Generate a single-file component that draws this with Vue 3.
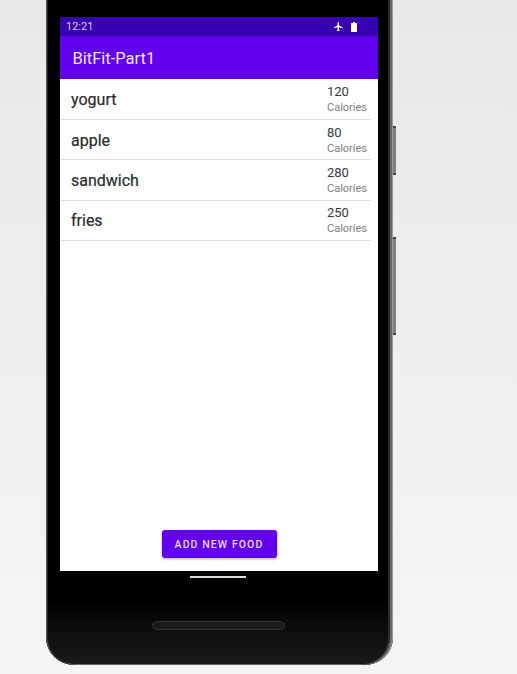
<template>
  <div class="page">
    <div class="phone">
      <div class="side-btn power"></div>
      <div class="side-btn volume"></div>
      <div class="screen">
        <div class="status-bar">
          <span class="time">12:21</span>
          <div class="status-icons">
            <svg width="11" height="11" viewBox="0 0 24 24"><path fill="#fff" d="M21 16v-2l-8-5V3.500C13 2.670 12.330 2 11.500 2S10 2.670 10 3.500V9l-8 5v2l8-2.500V19l-2 1.500V22l3.500-1 3.500 1v-1.500L13 19v-5.500l8 2.500z"/></svg>
            <svg width="12" height="12" viewBox="0 0 24 24"><path fill="#fff" d="M17 4h-3V2h-4v2H7c-.6 0-1 .4-1 1v16c0 .6.400 1 1 1h10c.6 0 1-.4 1-1V5c0-.6-.4-1-1-1z"/></svg>
          </div>
        </div>
        <div class="app-bar">BitFit-Part1</div>
        <div class="content">
          <div class="food-list">
            <div class="food-row" v-for="food in foods" :key="food.name">
              <span class="food-name">{{ food.name }}</span>
              <div class="food-cal">
                <span class="cal-num">{{ food.calories }}</span>
                <span class="cal-label">Calories</span>
              </div>
            </div>
          </div>
          <button class="add-btn">ADD NEW FOOD</button>
        </div>
      </div>
      <div class="nav-zone">
        <div class="home-pill"></div>
        <div class="speaker"></div>
      </div>
    </div>
  </div>
</template>

<script setup>
const foods = [
  { name: 'yogurt', calories: 120 },
  { name: 'apple', calories: 80 },
  { name: 'sandwich', calories: 280 },
  { name: 'fries', calories: 250 }
]
</script>

<style>
html, body {
  margin: 0;
  overflow: hidden;
}
</style>

<style scoped>
.page {
  width: 517px;
  height: 674px;
  box-sizing: border-box;
  padding-left: 46px;
  background: linear-gradient(#e8e8e8, #f5f5f5);
  font-family: Roboto, "Liberation Sans", sans-serif;
  overflow: hidden;
}
.phone {
  position: relative;
  width: 347px;
  height: 665px;
  box-sizing: border-box;
  padding: 17px 14px 0;
  background: linear-gradient(#000 90%, #1a1a1a 100%);
  border-radius: 0 0 28px 28px;
  box-shadow: inset 1px 0 0 #555, inset 2px 0 0 #222, inset -1px 0 0 #999, inset -3px 0 0 #666, inset -5px 0 0 #2a2a2a, inset 0 -1px 0 #666;
  display: flex;
  flex-direction: column;
}
.side-btn {
  position: absolute;
  right: -3px;
  width: 3px;
  background: #808080;
  border-top: 2px solid #444;
  border-bottom: 2px solid #444;
}
.power {
  top: 126px;
  height: 45px;
}
.volume {
  top: 237px;
  height: 94px;
}
.screen {
  height: 554px;
  width: 318px;
  background: #fff;
  display: flex;
  flex-direction: column;
}
.status-bar {
  height: 19px;
  flex: none;
  background: #3700b3;
  color: #d9ccf2;
  display: flex;
  align-items: center;
  justify-content: space-between;
  padding: 0 18px 0 6px;
  font-size: 11px;
}
.status-icons {
  display: flex;
  gap: 4px;
}
.app-bar {
  height: 43px;
  flex: none;
  box-sizing: border-box;
  background: #6200ee;
  color: #f1e8fd;
  font-size: 16.500px;
  line-height: 45px;
  padding-left: 12.500px;
}
.content {
  flex: 1;
  display: flex;
  flex-direction: column;
  align-items: center;
  justify-content: space-between;
  padding-bottom: 13px;
}
.food-list {
  width: 100%;
  padding-top: 0.700px;
}
.food-row {
  height: 40.300px;
  box-sizing: border-box;
  width: 311px;
  border-bottom: 1px solid #dedede;
  display: flex;
  align-items: center;
  justify-content: space-between;
  padding: 1px 4px 0 11px;
}
.food-name {
  font-size: 16px;
  color: #2a2a2a;
  -webkit-text-stroke: 0.200px #2a2a2a;
}
.food-cal {
  display: flex;
  flex-direction: column;
  width: 40px;
}
.cal-num {
  font-size: 13px;
  line-height: 16px;
  color: #3a3a3a;
}
.cal-label {
  font-size: 11px;
  line-height: 15px;
  color: #808080;
}
.add-btn {
  width: 115px;
  height: 28px;
  border: 0;
  border-radius: 3px;
  background: #6200ee;
  color: #eadcfc;
  font-family: inherit;
  font-size: 10.500px;
  font-weight: 500;
  letter-spacing: 1.100px;
  padding: 0;
  box-shadow: 0 1px 3px rgba(0, 0, 0, 0.35);
}
.nav-zone {
  flex: 1;
  display: flex;
  flex-direction: column;
  align-items: center;
  padding-top: 5px;
  padding-right: 3px;
}
.home-pill {
  width: 56px;
  height: 2px;
  background: #ddd;
}
.speaker {
  width: 131px;
  height: 7px;
  margin-top: 43px;
  border: 1px solid #333;
  border-radius: 5px;
  background: #1a1a1a;
}
</style>
